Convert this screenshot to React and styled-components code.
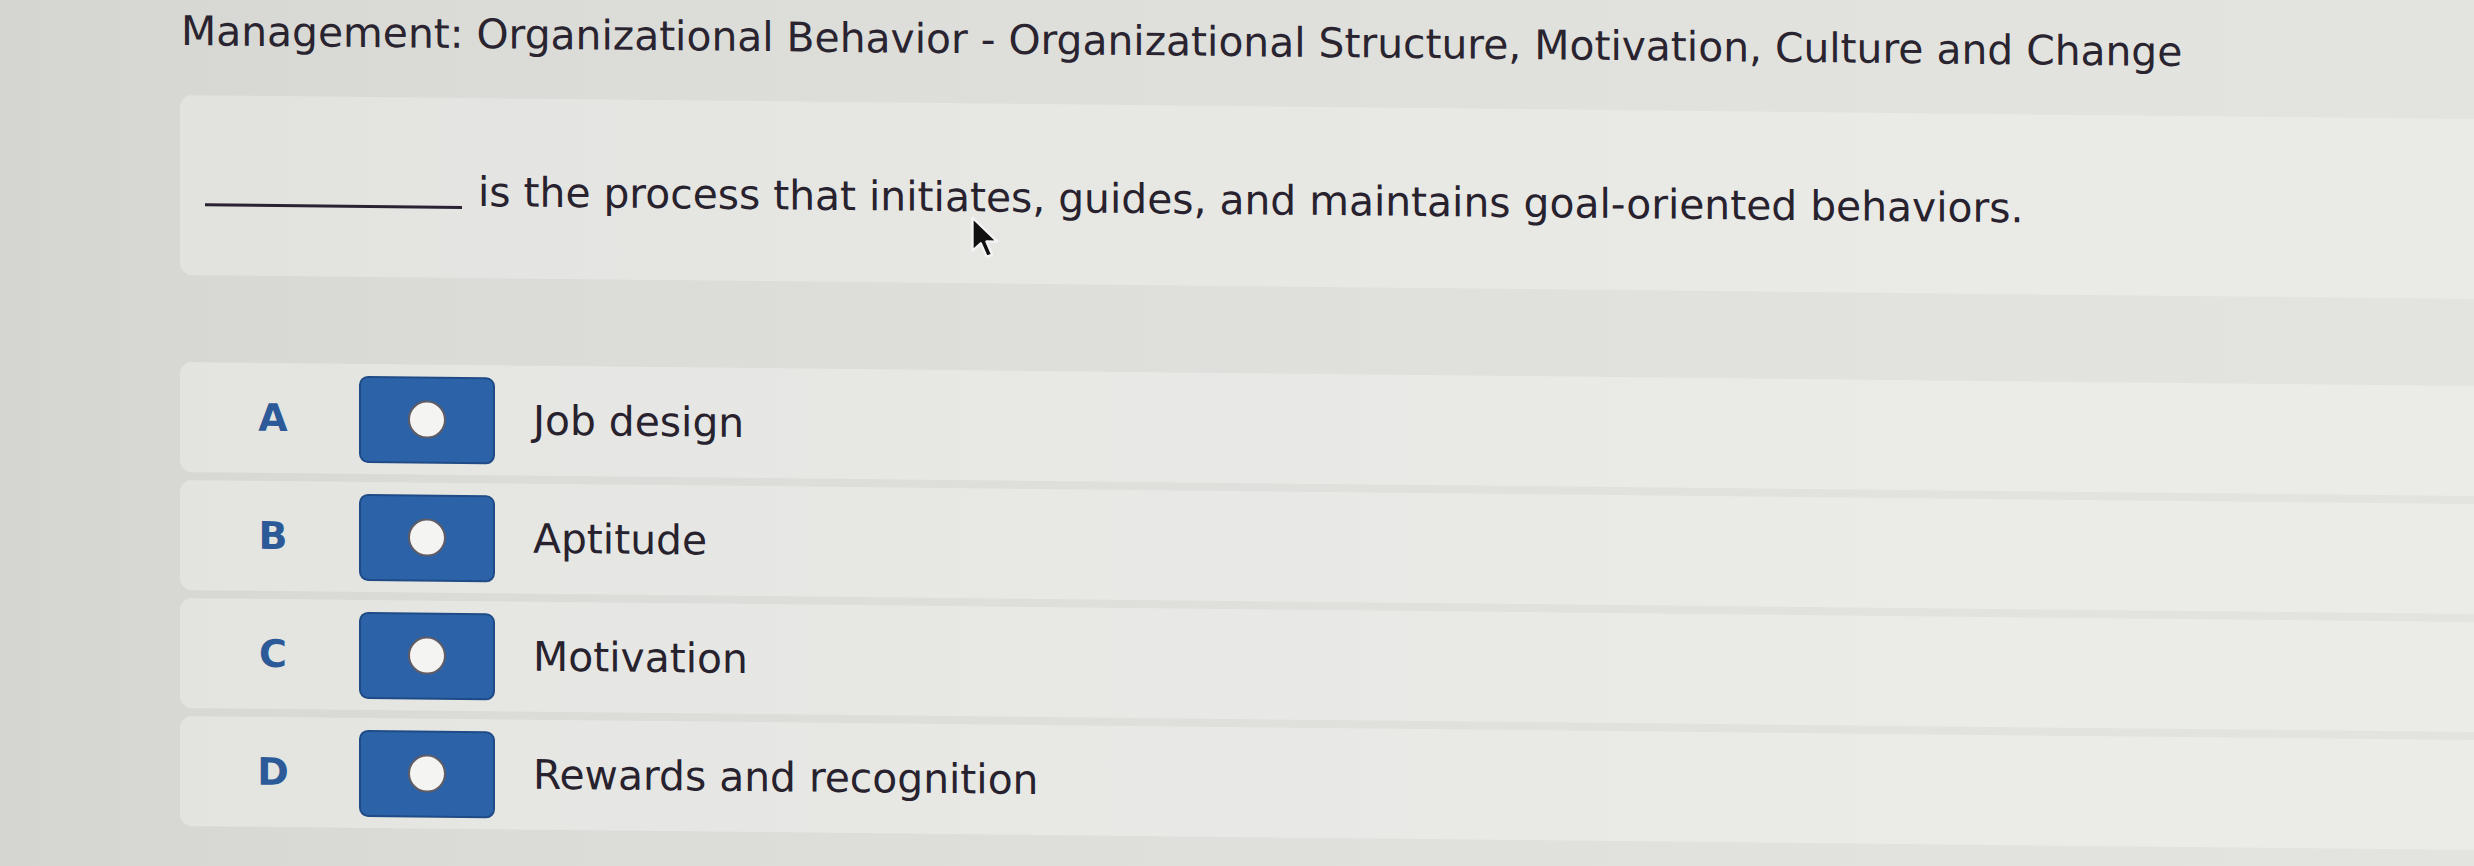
import React from "react";
import styled, { createGlobalStyle } from "styled-components";

const GlobalStyle = createGlobalStyle`
  html, body {
    margin: 0;
    padding: 0;
  }
  body {
    width: 2474px;
    height: 866px;
    overflow: hidden;
    background: linear-gradient(90deg, #d5d5d1 0%, #dbdbd7 20%, #dfdfdb 50%, #e2e2de 80%, #e3e3df 100%);
    font-family: "DejaVu Sans", Verdana, sans-serif;
    color: #27222d;
  }
`;

/* The reference is a photo of a screen: the right side sits a little lower */
const Page = styled.main`
  position: relative;
  display: flex;
  flex-direction: column;
  width: 2560px;
  height: 866px;
  box-sizing: border-box;
  padding: 7px 0 0 180px;
  transform: skewY(0.6deg);
  transform-origin: 180px 0;
`;

const Title = styled.h1`
  margin: 0 0 40px 1px;
  font-size: 40.8px;
  font-weight: normal;
  line-height: 48px;
  white-space: nowrap;
  color: #29242f;
`;

const QuestionBox = styled.section`
  height: 180px;
  box-sizing: border-box;
  padding: 70px 0 0 25px;
  border-radius: 12px 0 0 12px;
  background: rgba(255, 255, 255, 0.27);
`;

const QuestionText = styled.p`
  margin: 0;
  font-size: 40.8px;
  line-height: 48px;
  white-space: nowrap;
  color: #27222d;
`;

const Blank = styled.span`
  display: inline-block;
  width: 257px;
  height: 0;
  border-bottom: 3px solid #2a2233;
  margin: 0 16px -3px 0;
  vertical-align: baseline;
`;

const Options = styled.ul`
  list-style: none;
  margin: 87px 0 0 0;
  padding: 0;
  display: flex;
  flex-direction: column;
  gap: 8px;
`;

const OptionRow = styled.li`
  display: flex;
  align-items: center;
  height: 110px;
  padding-left: 53px;
  border-radius: 12px 0 0 12px;
  background: rgba(255, 255, 255, 0.3);
`;

const Letter = styled.span`
  width: 80px;
  text-align: center;
  font-family: "DejaVu Sans", Verdana, sans-serif;
  font-weight: bold;
  font-size: 38px;
  line-height: 40px;
  color: #2c5a99;
`;

const RadioButton = styled.button`
  display: flex;
  align-items: center;
  justify-content: center;
  width: 136px;
  height: 87px;
  margin-left: 46px;
  padding: 0;
  box-sizing: border-box;
  border: 2px solid #1f4b86;
  border-radius: 9px;
  background: #2c63a8;
  cursor: pointer;
`;

const Dot = styled.span`
  width: 38px;
  height: 38px;
  box-sizing: border-box;
  border-radius: 50%;
  border: 2px solid #5f5c66;
  background: #f4f4f2;
`;

const Label = styled.span`
  margin-left: 38px;
  font-size: 40.8px;
  line-height: 48px;
  white-space: nowrap;
  color: #27222d;
`;

const Cursor = styled.svg`
  position: absolute;
  left: 970px;
  top: 207px;
  width: 31px;
  height: 45px;
  pointer-events: none;
`;

const options = [
  { key: "A", text: "Job design" },
  { key: "B", text: "Aptitude" },
  { key: "C", text: "Motivation" },
  { key: "D", text: "Rewards and recognition" },
];

export default function App() {
  return (
    <>
      <GlobalStyle />
      <Page>
        <Title>
          Management: Organizational Behavior - Organizational Structure, Motivation, Culture and Change
        </Title>
        <QuestionBox>
          <QuestionText>
            <Blank />
            is the process that initiates, guides, and maintains goal-oriented behaviors.
          </QuestionText>
        </QuestionBox>
        <Options>
          {options.map((o) => (
            <OptionRow key={o.key}>
              <Letter>{o.key}</Letter>
              <RadioButton aria-label={o.text}>
                <Dot />
              </RadioButton>
              <Label>{o.text}</Label>
            </OptionRow>
          ))}
        </Options>
        <Cursor viewBox="0 0 13 19">
          <path
            d="M1 1 L1 15 L4.5 11.8 L7 17.5 L9.3 16.5 L6.9 11 L11.5 11 Z"
            fill="#111"
            stroke="#f4f4f4"
            strokeWidth="1"
            strokeLinejoin="round"
          />
        </Cursor>
      </Page>
    </>
  );
}
